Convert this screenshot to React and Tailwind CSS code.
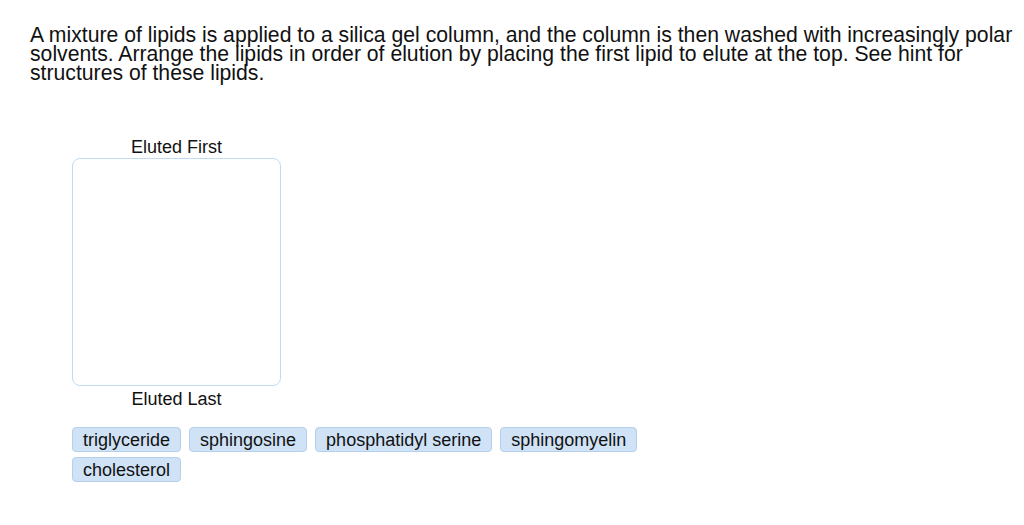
export default function App() {
  const chips = ["triglyceride", "sphingosine", "phosphatidyl serine", "sphingomyelin", "cholesterol"];
  return (
    <div className="w-[1024px] h-[525px] bg-white text-[#111] pl-[30px] pt-[25px]" style={{ fontFamily: '"Liberation Sans", Arial, sans-serif' }}>
      <p className="text-[21.2px] leading-[19px] whitespace-nowrap">
        A mixture of lipids is applied to a silica gel column, and the column is then washed with increasingly polar
        <br />
        solvents. Arrange the lipids in order of elution by placing the first lipid to elute at the top. See hint for
        <br />
        structures of these lipids.
      </p>
      <div className="ml-[42px] mt-[55px] flex flex-col">
        <div className="w-[209px] flex flex-col items-center">
          <div className="text-[18px] leading-[20px] mb-[1px]">Eluted First</div>
          <div className="w-[209px] h-[228px] border border-[#c4daf1] rounded-[8px] bg-white"></div>
          <div className="text-[18px] leading-[20px] mt-[3px]">Eluted Last</div>
        </div>
        <div className="mt-[18px] w-[620px] flex flex-wrap gap-x-[8px] gap-y-[5px]">
          {chips.map((c) => (
            <div key={c} className="h-[25px] px-[10px] flex items-center bg-[#cfe2f6] border border-[#b5d0ec] rounded-[4px] text-[18px] leading-none text-[#111]">
              {c}
            </div>
          ))}
        </div>
      </div>
    </div>
  );
}
